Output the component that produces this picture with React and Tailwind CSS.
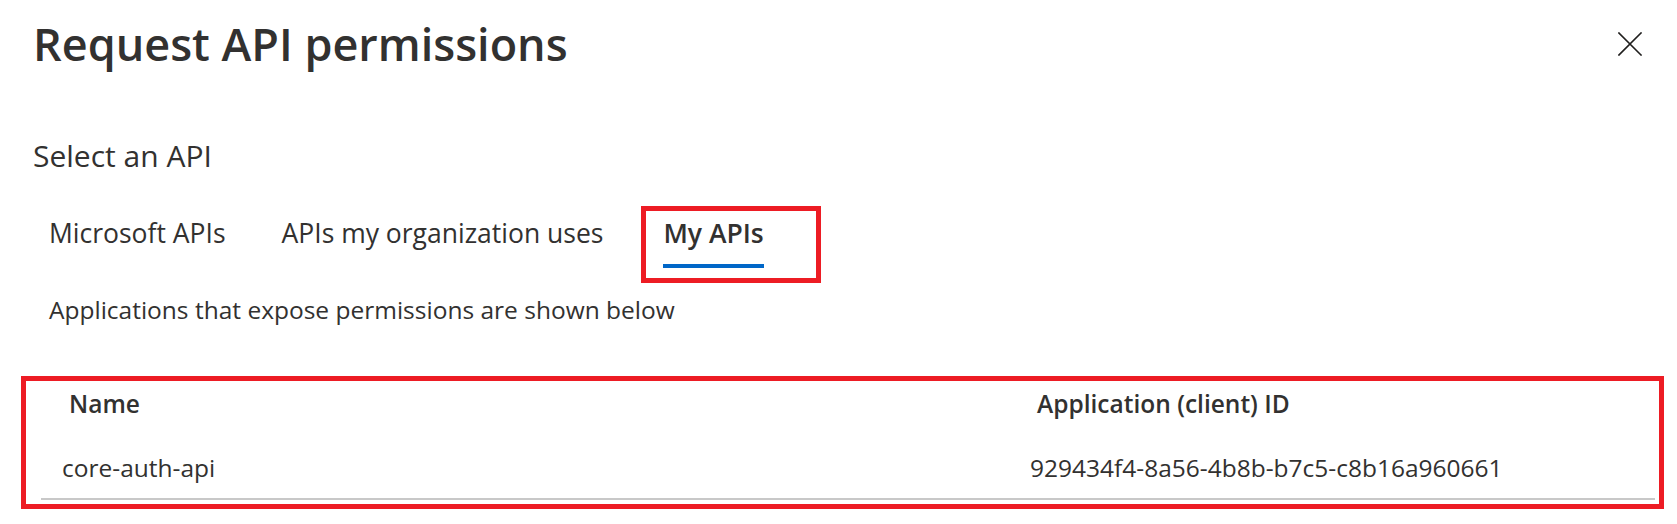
import React from "react";

function CloseIcon() {
  return (
    <svg width="24" height="24" viewBox="0 0 24 24" className="block" aria-hidden="true">
      <path d="M1 1 L23 23 M23 1 L1 23" stroke="#201f1e" strokeWidth="1.6" strokeLinecap="square" fill="none" />
    </svg>
  );
}

export default function App() {
  return (
    <div className="w-[1677px] h-[524px] bg-white text-[#323130] font-['Open_Sans',sans-serif] overflow-hidden">
      {/* Header */}
      <div className="flex items-start justify-between pl-[33px] pr-[35px] pt-[16px]">
        <h1 className="text-[45px] leading-[56px] font-semibold tracking-[0px]">Request API permissions</h1>
        <div className="mt-[16px]">
          <CloseIcon />
        </div>
      </div>

      {/* Select an API */}
      <div className="pl-[33px] mt-[64px] text-[30px] leading-[40px]">Select an API</div>

      {/* Tabs */}
      <div className="flex items-start pl-[49px] mt-[30px]">
        <div className="pt-[9px] text-[26.5px] leading-[36px]">Microsoft APIs</div>
        <div className="pt-[9px] ml-[56px] text-[26.5px] leading-[36px]">APIs my organization uses</div>
        <div className="ml-[38px] border-[5px] border-[#ed1c24] pl-[17px] pr-[52px] pt-[4px] pb-[10px]">
          <div className="inline-flex flex-col">
            <span className="text-[26.5px] leading-[36px] font-semibold">My APIs</span>
            <span className="mt-[13px] h-[4px] bg-[#0067c8]"></span>
          </div>
        </div>
      </div>

      {/* Description */}
      <div className="pl-[49px] mt-[11px] text-[24.5px] leading-[32px]">
        Applications that expose permissions are shown below
      </div>

      {/* Table */}
      <div className="ml-[21px] mt-[50px] w-[1643px] border-[5px] border-[#ed1c24] pb-[4px]">
        <div className="ml-[15px] mr-[4px]">
          <div className="grid grid-cols-[968px_1fr] pl-[28px] pt-[7px] text-[24.5px] leading-[32px] font-semibold">
            <div>Name</div>
            <div>Application (client) ID</div>
          </div>
          <div className="grid grid-cols-[968px_1fr] pl-[21px] mt-[32px] pb-[14px] border-b-2 border-[#c8c8c8] text-[24.5px] leading-[32px]">
            <div>core-auth-api</div>
            <div>929434f4-8a56-4b8b-b7c5-c8b16a960661</div>
          </div>
        </div>
      </div>
    </div>
  );
}
